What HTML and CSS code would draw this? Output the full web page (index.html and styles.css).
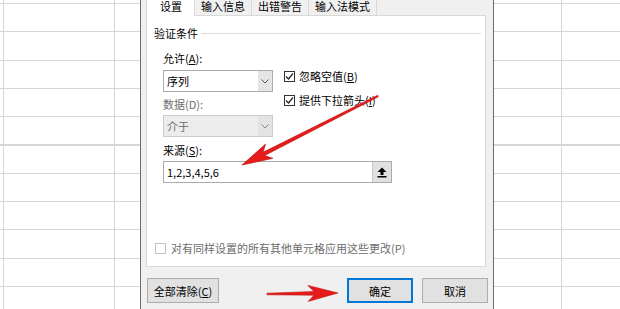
FILE: index.html
```html
<!DOCTYPE html>
<html lang="zh-CN">
<head>
    <meta charset="UTF-8">
    <title>数据验证</title>
    <link rel="stylesheet" href="styles.css">
</head>
<body>
    <div class="sheet"></div>

    <div class="dialog">
        <div class="tabs">
            <div class="tab active">设置</div>
            <div class="tab">输入信息</div>
            <div class="tab">出错警告</div>
            <div class="tab">输入法模式</div>
        </div>

        <div class="panel">
            <div class="group-title">
                <span>验证条件</span>
                <div class="group-line"></div>
            </div>

            <div class="group-body">
                <div class="row">
                    <div class="col-left">
                        <div class="field-label">允许(<u>A</u>):</div>
                        <div class="combo">
                            <div class="combo-value">序列</div>
                            <div class="combo-btn">
                                <svg width="8" height="5" viewBox="0 0 8 5"><polyline points="0.5,0.5 4,4 7.5,0.5" fill="none" stroke="#555" stroke-width="1"/></svg>
                            </div>
                        </div>
                        <div class="field-label disabled gap">数据(D):</div>
                        <div class="combo disabled">
                            <div class="combo-value">介于</div>
                            <div class="combo-btn">
                                <svg width="8" height="5" viewBox="0 0 8 5"><polyline points="0.5,0.5 4,4 7.5,0.5" fill="none" stroke="#888" stroke-width="1"/></svg>
                            </div>
                        </div>
                    </div>
                    <div class="col-right">
                        <div class="check">
                            <span class="box"><svg width="9" height="9" viewBox="0 0 9 9"><polyline points="1,4.5 3.5,7 8,1.5" fill="none" stroke="#222" stroke-width="1.2"/></svg></span>
                            <span>忽略空值(<u>B</u>)</span>
                        </div>
                        <div class="check">
                            <span class="box"><svg width="9" height="9" viewBox="0 0 9 9"><polyline points="1,4.5 3.5,7 8,1.5" fill="none" stroke="#222" stroke-width="1.2"/></svg></span>
                            <span>提供下拉箭头(<u>I</u>)</span>
                        </div>
                    </div>
                </div>

                <div class="field-label source-label">来源(<u>S</u>):</div>
                <div class="source">
                    <div class="source-value">1,2,3,4,5,6</div>
                    <div class="source-btn">
                        <svg width="10" height="11" viewBox="0 0 10 11">
                            <polygon points="5,0.5 9.5,5 6.5,5 6.5,8 3.5,8 3.5,5 0.5,5" fill="#000"/>
                            <rect x="0.5" y="9" width="9" height="1.5" fill="#000"/>
                        </svg>
                    </div>
                </div>
            </div>

            <div class="check disabled apply-all">
                <span class="box"></span>
                <span>对有同样设置的所有其他单元格应用这些更改(P)</span>
            </div>
        </div>

        <div class="buttons">
            <button class="btn clear">全部清除(<u>C</u>)</button>
            <div class="btn-group">
                <button class="btn default">确定</button>
                <button class="btn">取消</button>
            </div>
        </div>
    </div>

    <svg class="arrows" width="620" height="309" viewBox="0 0 620 309">
        <g transform="translate(378,96) rotate(153.1)">
            <polygon points="0,-0.8 128,-1.8 122,-8 152.5,0 122,8 128,1.8 0,0.8" fill="#e51c1c" stroke="#c41010" stroke-width="0.6"/>
        </g>
        <g transform="translate(267,294) rotate(-0.8)">
            <polygon points="0,-0.8 47,-1.8 41,-8 71,0 41,8 47,1.8 0,0.8" fill="#e51c1c" stroke="#c41010" stroke-width="0.6"/>
        </g>
    </svg>
</body>
</html>
```

FILE: styles.css
```css
* {
    box-sizing: border-box;
}

body {
    margin: 0;
    width: 620px;
    height: 309px;
    overflow: hidden;
    position: relative;
    font-family: "Noto Sans CJK SC", "Microsoft YaHei", sans-serif;
    font-size: 11px;
    color: #000;
}

.sheet {
    width: 620px;
    height: 309px;
    background-color: #ffffff;
    background-image:
        linear-gradient(#d6d6d6, #d6d6d6),
        linear-gradient(#d6d6d6, #d6d6d6),
        linear-gradient(#d6d6d6, #d6d6d6),
        repeating-linear-gradient(to bottom, transparent 0 3px, #d6d6d6 3px 4px, transparent 4px 28.3px);
    background-size: 1px 100%, 1px 100%, 1px 100%, 100% 100%;
    background-position: 3px 0, 114px 0, 561px 0, 0 0;
    background-repeat: no-repeat;
}

/* the dialog window sits over the sheet, its top runs past the frame */
.dialog {
    position: absolute;
    top: 0;
    left: 140px;
    width: 354px;
    height: 309px;
    background-color: #f0f0f0;
    border-left: 1px solid #6b6b6b;
    border-right: 1px solid #6b6b6b;
    padding: 0 7px 0 5px;
}

.tabs {
    display: flex;
    align-items: flex-end;
    height: 15px;
}

.tab {
    height: 15px;
    line-height: 12px;
    padding: 0 6px;
    margin-left: -1px;
    border: 1px solid #d9d9d9;
    border-top: none;
    border-bottom: none;
    background-color: #f0f0f0;
    white-space: nowrap;
}

.tab.active {
    position: relative;
    z-index: 1;
    height: 16px;
    line-height: 13px;
    margin-left: 0;
    margin-bottom: -1px;
    padding: 0 12px 0 13px;
    background-color: #ffffff;
}

.panel {
    height: 252px;
    background-color: #ffffff;
    border: 1px solid #d9d9d9;
    padding: 10px 4px 0 7px;
}

.group-title {
    display: flex;
    align-items: center;
    gap: 3px;
    height: 14px;
    line-height: 14px;
}

.group-line {
    flex: 1;
    height: 1px;
    background-color: #dcdcdc;
}

.group-body {
    padding-left: 9px;
}

.row {
    display: flex;
    gap: 11px;
    margin-top: 11px;
}

.col-left {
    width: 110px;
}

.field-label {
    height: 14px;
    line-height: 14px;
}

.field-label.gap {
    margin-top: 5px;
}

.disabled {
    color: #6d6d6d;
}

.combo {
    display: flex;
    height: 22px;
    margin-top: 5px;
    border: 1px solid #ababab;
    background-color: #ffffff;
}

.combo.disabled {
    margin-top: 4px;
    border-color: #cccccc;
    background-color: #ececec;
}

.combo-value {
    flex: 1;
    padding-left: 3px;
    line-height: 20px;
}

.combo-btn {
    width: 14px;
    display: flex;
    align-items: center;
    justify-content: center;
    background-color: #e5e5e5;
}

.combo.disabled .combo-btn {
    background-color: #e3e3e3;
}

.col-right {
    display: flex;
    flex-direction: column;
    gap: 10px;
    padding-top: 18px;
}

.check {
    display: flex;
    align-items: center;
    gap: 4px;
    height: 14px;
    line-height: 14px;
    white-space: nowrap;
}

.box {
    width: 11px;
    height: 11px;
    border: 1px solid #333333;
    background-color: #ffffff;
    display: flex;
    align-items: center;
    justify-content: center;
}

.source-label {
    margin-top: 6px;
}

.source {
    display: flex;
    width: 229px;
    height: 22px;
    margin-top: 4px;
    border: 1px solid #ababab;
}

.source-value {
    flex: 1;
    padding-left: 3px;
    line-height: 20px;
}

.source-btn {
    width: 19px;
    display: flex;
    align-items: center;
    justify-content: center;
    background-color: #e1e1e1;
    border-left: 1px solid #c8c8c8;
}

.apply-all {
    margin-top: 58px;
    padding-left: 1px;
    gap: 5px;
}

.apply-all .box {
    border-color: #c2c2c2;
}

.buttons {
    display: flex;
    justify-content: space-between;
    margin: 11px -2px 0 1px;
}

.btn-group {
    display: flex;
    gap: 9px;
}

.btn {
    height: 25px;
    width: 66px;
    padding: 0;
    font-family: inherit;
    font-size: 11px;
    color: #000;
    background-color: #e1e1e1;
    border: 1px solid #adadad;
}

.btn.clear {
    width: 72px;
}

.btn.default {
    border: 2px solid #0078d7;
}

.arrows {
    position: absolute;
    top: 0;
    left: 0;
    pointer-events: none;
}
```
